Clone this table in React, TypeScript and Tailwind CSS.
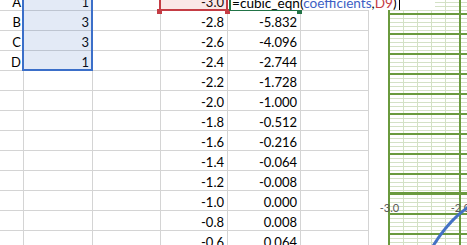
import React from 'react';

const data: [string, string, string, string][] = [
  ['A', '1', '-3.0', ''],
  ['B', '3', '-2.8', '-5.832'],
  ['C', '3', '-2.6', '-4.096'],
  ['D', '1', '-2.4', '-2.744'],
  ['', '', '-2.2', '-1.728'],
  ['', '', '-2.0', '-1.000'],
  ['', '', '-1.8', '-0.512'],
  ['', '', '-1.6', '-0.216'],
  ['', '', '-1.4', '-0.064'],
  ['', '', '-1.2', '-0.008'],
  ['', '', '-1.0', '0.000'],
  ['', '', '-0.8', '0.008'],
  ['', '', '-0.6', '0.064'],
];

function Cell({ children, pad = 'pr-[3px]' }: { children?: React.ReactNode; pad?: string }) {
  return (
    <div className={`flex items-end justify-end overflow-hidden whitespace-nowrap border-r border-b border-[#d4d4d4] ${pad} text-[13px] leading-[16px] text-black`}>
      {children}
    </div>
  );
}

function Chart() {
  const H = 245;
  const W = 98;
  const x0 = 20; // local x of -3.0
  const ux = 71;
  const y0 = 193.5;
  const uy = 20;
  const vMinor = [34.5, 48.5, 62.5, 76.5];
  const hMinor: number[] = [];
  for (let m = -3; m < 60; m++) {
    if (m % 5 !== 0) hMinor.push(14 + 4 * m + 0.5);
  }
  const hMajor: number[] = [];
  for (let k = 0; k < 12; k++) {
    const y = 14 + 20 * k;
    if (y !== 194) hMajor.push(y);
  }
  const pts: string[] = [];
  for (let x = -2.5; x <= -1.8; x += 0.01) {
    const px = x0 + ux * (x + 3);
    const py = y0 - uy * Math.pow(x + 1, 3);
    pts.push(`${px.toFixed(2)},${py.toFixed(2)}`);
  }
  return (
    <svg width={W} height={H} viewBox={`0 0 ${W} ${H}`} className="block">
      <rect x={0} y={0} width={W} height={H} fill="#ffffff" />
      {hMinor.map((y) => (
        <line key={`hm${y}`} x1={x0} x2={W} y1={y} y2={y} stroke="#d3e1c5" strokeWidth={1} />
      ))}
      {vMinor.map((x) => (
        <line key={`vm${x}`} x1={x} x2={x} y1={0} y2={H} stroke="#d3e1c5" strokeWidth={1} />
      ))}
      {hMajor.map((y) => (
        <line key={`hM${y}`} x1={x0 - 1} x2={W} y1={y} y2={y} stroke="#6a9a3e" strokeWidth={2} />
      ))}
      <line x1={20} x2={20} y1={0} y2={H} stroke="#6a9a3e" strokeWidth={2} />
      <line x1={91} x2={91} y1={0} y2={H} stroke="#6a9a3e" strokeWidth={2} />
      <line x1={x0 - 1} x2={W} y1={193.5} y2={193.5} stroke="#6a9a3e" strokeWidth={3} />
      <text x={20.5} y={212} textAnchor="middle" fontFamily="Lato, 'Liberation Sans', sans-serif" fontSize={11} fill="#595959">-3.0</text>
      <text x={91.5} y={212} textAnchor="middle" fontFamily="Lato, 'Liberation Sans', sans-serif" fontSize={11} fill="#595959">-2.0</text>
      <polyline points={pts.join(' ')} fill="none" stroke="#4472c4" strokeWidth={3} strokeLinecap="round" strokeLinejoin="round" />
    </svg>
  );
}

export default function App() {
  return (
    <div className="relative h-[245px] w-[467px] overflow-hidden bg-white font-['Lato','Liberation_Sans',sans-serif]">
      <div className="-mt-[9px] grid grid-cols-[24px_69px_68px_67px_73px_68px_68px_68px] auto-rows-[20px]">
        {data.map((r, i) => (
          <React.Fragment key={i}>
            <Cell pad="pr-[2px]">{r[0]}</Cell>
            <Cell>{r[1]}</Cell>
            <Cell />
            <Cell>{r[2]}</Cell>
            <Cell>{r[3]}</Cell>
            <Cell />
            <Cell />
            <Cell />
          </React.Fragment>
        ))}
      </div>

      {/* blue range reference: coefficients */}
      <div className="absolute left-[22px] top-[-10px] h-[81px] w-[71px] border-2 border-[#3b6fc9] bg-[#4472c4]/15" />

      {/* red reference: D9 */}
      <div className="absolute left-[159px] top-[-10px] h-[21px] w-[69px] border-2 border-[#c43c44] bg-[#e06060]/15" />
      <div className="absolute left-[157px] top-[9px] h-[5px] w-[5px] bg-[#c43c44]" />
      <div className="absolute left-[225px] top-[9px] h-[5px] w-[5px] bg-[#c43c44]" />

      {/* active cell (green) */}
      <div className="absolute left-[229px] top-[-10px] h-[21px] w-[72px] border-2 border-[#217346]" />
      <div className="absolute left-[297px] top-[9px] h-[5px] w-[5px] bg-[#217346]" />

      {/* chart */}
      <div className="absolute left-[369px] top-0">
        <Chart />
      </div>

      {/* in-cell editor */}
      <div className="absolute left-[231px] top-0 h-[10px] w-[204px] overflow-hidden bg-white">
        <div className="-mt-[5px] whitespace-nowrap pl-[1px] text-[13.6px] leading-[16px] text-black">
          <span>=cubic_eqn(</span>
          <span className="text-[#3d5fc4]">coefficients</span>
          <span>,</span>
          <span className="text-[#c43c44]">D9</span>
          <span>)</span>
          <span className="ml-[2px] inline-block h-[16px] w-[1px] bg-black align-top" />
        </div>
      </div>
    </div>
  );
}
